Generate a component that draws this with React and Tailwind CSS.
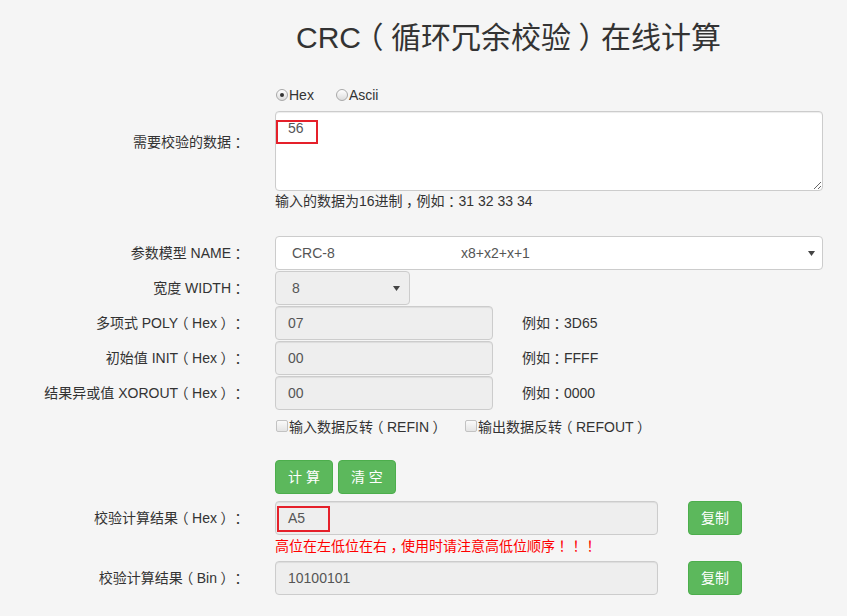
import React from "react";

const FONT = "font-['Liberation_Sans','Noto_Sans_CJK_SC',sans-serif]";

// full-width punctuation in the shot sits centred in its em box:
// take the half-width form and centre it in a 1em cell
function T({ children }) {
  const parts = String(children).split(/([（）：，！])/);
  return (
    <>
      {parts.map((p, i) =>
        /^[（）：，！]$/.test(p) ? (
          <span
            key={i}
            className="inline-block w-[1em] text-center [font-feature-settings:'halt']"
          >
            {p}
          </span>
        ) : (
          p
        ),
      )}
    </>
  );
}

function Caret() {
  return (
    <svg width="7" height="5" viewBox="0 0 7 5" className="shrink-0">
      <path d="M0 0 L7 0 L3.5 5 Z" fill="#444" />
    </svg>
  );
}

function Radio({ checked, label, className = "" }) {
  return (
    <label className={`inline-flex items-center h-[20px] ${className}`}>
      <span className="w-[12px] h-[12px] rounded-full border border-[#a9a9a9] bg-gradient-to-b from-[#ffffff] to-[#dcdcdc] flex items-center justify-center">
        {checked && <span className="w-[4px] h-[4px] rounded-full bg-[#333]" />}
      </span>
      <span className="ml-[1px] text-[#333]">{label}</span>
    </label>
  );
}

function Checkbox({ label, className = "" }) {
  return (
    <label className={`inline-flex items-center h-[20px] ${className}`}>
      <span className="w-[12px] h-[12px] rounded-[2px] border border-[#c2c2c2] bg-gradient-to-b from-[#fafafa] to-[#e4e4e4] mt-[-2px]" />
      <span className="ml-[1px] text-[#333]">
        <T>{label}</T>
      </span>
    </label>
  );
}

function Row({ label, children, className = "" }) {
  return (
    <div className={`flex items-center h-[34px] ${className}`}>
      <div className="w-[245px] shrink-0 text-right text-[#333] whitespace-nowrap">
        <T>{label}</T>
      </div>
      <div className="ml-[30px] flex items-center">{children}</div>
    </div>
  );
}

function Field({ value, width, children }) {
  return (
    <div
      className={`relative h-[34px] ${width} rounded-[4px] border border-[#ccc] bg-[#eeeeee] shadow-[inset_0_1px_1px_rgba(0,0,0,0.075)] px-[12px] flex items-center text-[#555]`}
    >
      {value}
      {children}
    </div>
  );
}

function GreenButton({ children, className = "" }) {
  return (
    <button
      className={`h-[34px] px-[12px] rounded-[4px] border border-[#4cae4c] bg-[#5cb85c] text-white whitespace-pre ${className}`}
    >
      {children}
    </button>
  );
}

export default function App() {
  return (
    <div
      className={`min-h-screen w-full bg-[#f5f5f5] text-[14px] leading-[20px] text-[#333] [text-spacing-trim:space-all] ${FONT}`}
    >
      <div className="pt-[21px] pl-[170px]">
        <h2 className="h-[33px] text-center text-[30px] leading-[33px] font-normal text-[#333]">
          <T>CRC（循环冗余校验）在线计算</T>
        </h2>
      </div>

      {/* data input */}
      <div className="mt-[31px] pl-[276px] flex items-center h-[20px]">
        <Radio checked label="Hex" />
        <Radio label="Ascii" className="ml-[22px]" />
      </div>

      <div className="mt-[6px] flex items-start">
        <div className="w-[245px] shrink-0 h-[80px] text-right pt-[21px]">
          <T>需要校验的数据：</T>
        </div>
        <div className="ml-[30px] relative">
          <textarea
            readOnly
            defaultValue="56"
            className={`block w-[548px] h-[80px] rounded-[4px] border border-[#ccc] bg-white px-[12px] py-[6px] text-[14px] leading-[20px] text-[#555] outline-none shadow-[inset_0_1px_1px_rgba(0,0,0,0.075)] ${FONT}`}
          />
          <div className="absolute left-[1px] top-[9px] w-[42px] h-[24px] border-2 border-[#e5202a] pointer-events-none" />
        </div>
      </div>
      <div className="pl-[275px] h-[20px]">
        <T>输入的数据为16进制，例如：31 32 33 34</T>
      </div>

      {/* parameters */}
      <Row label="参数模型 NAME：" className="mt-[25px]">
        <div className="h-[34px] w-[548px] rounded-[4px] border border-[#ccc] bg-white pl-[16px] pr-[7px] flex items-center text-[#555]">
          <span className="w-[169px]">CRC-8</span>
          <span className="flex-1">x8+x2+x+1</span>
          <Caret />
        </div>
      </Row>
      <Row label="宽度 WIDTH：" className="mt-[1px]">
        <div className="h-[34px] w-[135px] rounded-[4px] border border-[#ccc] bg-[#eeeeee] pl-[16px] pr-[9px] flex items-center text-[#555]">
          <span className="flex-1">8</span>
          <Caret />
        </div>
      </Row>
      <Row label="多项式 POLY（Hex）：" className="mt-[1px]">
        <Field value="07" width="w-[218px]" />
        <span className="ml-[29px]">
          <T>例如：3D65</T>
        </span>
      </Row>
      <Row label="初始值 INIT（Hex）：" className="mt-[1px]">
        <Field value="00" width="w-[218px]" />
        <span className="ml-[29px]">
          <T>例如：FFFF</T>
        </span>
      </Row>
      <Row label="结果异或值 XOROUT（Hex）：" className="mt-[1px]">
        <Field value="00" width="w-[218px]" />
        <span className="ml-[29px]">
          <T>例如：0000</T>
        </span>
      </Row>

      <div className="mt-[7px] pl-[276px] flex items-center h-[20px]">
        <Checkbox label="输入数据反转（REFIN）" />
        <Checkbox label="输出数据反转（REFOUT）" className="ml-[22px]" />
      </div>

      <div className="mt-[23px] pl-[275px] flex items-center gap-[5px]">
        <GreenButton>计 算</GreenButton>
        <GreenButton>清 空</GreenButton>
      </div>

      {/* results */}
      <Row label="校验计算结果（Hex）：" className="mt-[7px]">
        <Field value="A5" width="w-[383px]">
          <div className="absolute left-[1px] top-[4px] w-[53px] h-[26px] border-2 border-[#e5202a] pointer-events-none" />
        </Field>
        <GreenButton className="ml-[30px]">复制</GreenButton>
      </Row>
      <div className="mt-[1px] pl-[275px] h-[20px] text-[#ff0000]">
        <T>高位在左低位在右，使用时请注意高低位顺序！！！</T>
      </div>
      <Row label="校验计算结果（Bin）：" className="mt-[5px]">
        <Field value="10100101" width="w-[383px]" />
        <GreenButton className="ml-[30px]">复制</GreenButton>
      </Row>
    </div>
  );
}
